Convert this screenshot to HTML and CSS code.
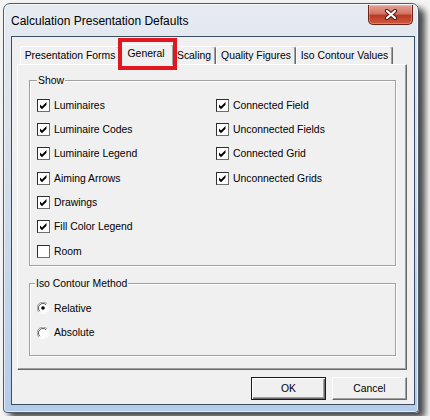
FILE: index.html
```html
<!DOCTYPE html>
<html lang="en">
<head>
<meta charset="UTF-8">
<meta name="viewport" content="width=device-width, initial-scale=1.0">
<title>Calculation Presentation Defaults</title>
<link rel="stylesheet" href="styles.css">
</head>
<body>
<div class="window">
    <div class="titlebar">
        <span class="title">Calculation Presentation Defaults</span>
        <button class="close" aria-label="Close">
            <svg width="14" height="11" viewBox="0 0 14 11">
                <path d="M3 2 L11 9 M11 2 L3 9" stroke="#4a1a12" stroke-width="4.2" stroke-linecap="round"/>
                <path d="M3 2 L11 9 M11 2 L3 9" stroke="#fff" stroke-width="2.2" stroke-linecap="round"/>
            </svg>
        </button>
    </div>

    <div class="client">
        <div class="tabs">
            <div class="tab tab-forms">Presentation Forms</div>
            <div class="tab tab-general active">General</div>
            <div class="tab tab-scaling">Scaling</div>
            <div class="tab tab-quality">Quality Figures</div>
            <div class="tab tab-iso">Iso Contour Values</div>
        </div>

        <div class="panel">
            <fieldset class="group group-show">
                <legend>Show</legend>
                <div class="check-grid">
                    <label class="check"><span class="box"><svg width="11" height="11" viewBox="0 0 11 11"><polygon points="2,4.5 4,6.5 8.5,2 8.5,4.8 4,9.3 2,7.3"/></svg></span>Luminaires</label>
                    <label class="check"><span class="box"><svg width="11" height="11" viewBox="0 0 11 11"><polygon points="2,4.5 4,6.5 8.5,2 8.5,4.8 4,9.3 2,7.3"/></svg></span>Luminaire Codes</label>
                    <label class="check"><span class="box"><svg width="11" height="11" viewBox="0 0 11 11"><polygon points="2,4.5 4,6.5 8.5,2 8.5,4.8 4,9.3 2,7.3"/></svg></span>Luminaire Legend</label>
                    <label class="check"><span class="box"><svg width="11" height="11" viewBox="0 0 11 11"><polygon points="2,4.5 4,6.5 8.5,2 8.5,4.8 4,9.3 2,7.3"/></svg></span>Aiming Arrows</label>
                    <label class="check"><span class="box"><svg width="11" height="11" viewBox="0 0 11 11"><polygon points="2,4.5 4,6.5 8.5,2 8.5,4.8 4,9.3 2,7.3"/></svg></span>Drawings</label>
                    <label class="check"><span class="box"><svg width="11" height="11" viewBox="0 0 11 11"><polygon points="2,4.5 4,6.5 8.5,2 8.5,4.8 4,9.3 2,7.3"/></svg></span>Fill Color Legend</label>
                    <label class="check"><span class="box"></span>Room</label>
                    <label class="check"><span class="box"><svg width="11" height="11" viewBox="0 0 11 11"><polygon points="2,4.5 4,6.5 8.5,2 8.5,4.8 4,9.3 2,7.3"/></svg></span>Connected Field</label>
                    <label class="check"><span class="box"><svg width="11" height="11" viewBox="0 0 11 11"><polygon points="2,4.5 4,6.5 8.5,2 8.5,4.8 4,9.3 2,7.3"/></svg></span>Unconnected Fields</label>
                    <label class="check"><span class="box"><svg width="11" height="11" viewBox="0 0 11 11"><polygon points="2,4.5 4,6.5 8.5,2 8.5,4.8 4,9.3 2,7.3"/></svg></span>Connected Grid</label>
                    <label class="check"><span class="box"><svg width="11" height="11" viewBox="0 0 11 11"><polygon points="2,4.5 4,6.5 8.5,2 8.5,4.8 4,9.3 2,7.3"/></svg></span>Unconnected Grids</label>
                </div>
            </fieldset>

            <fieldset class="group group-iso">
                <legend>Iso Contour Method</legend>
                <div class="radio-list">
                    <label class="radio">
                        <svg width="12" height="12" viewBox="0 0 12 12">
                            <circle cx="6" cy="6" r="5" fill="#fff"/>
                            <path d="M1.8 10.2 A5.5 5.5 0 0 1 10.2 1.8" fill="none" stroke="#9a9a9a"/>
                            <path d="M2.8 9.2 A4.5 4.5 0 0 1 9.2 2.8" fill="none" stroke="#555"/>
                            <path d="M10.2 1.8 A5.5 5.5 0 0 1 1.8 10.2" fill="none" stroke="#fff"/>
                            <circle cx="6" cy="6" r="1.8" fill="#000"/>
                        </svg>
                        Relative
                    </label>
                    <label class="radio">
                        <svg width="12" height="12" viewBox="0 0 12 12">
                            <circle cx="6" cy="6" r="5" fill="#fff"/>
                            <path d="M1.8 10.2 A5.5 5.5 0 0 1 10.2 1.8" fill="none" stroke="#9a9a9a"/>
                            <path d="M2.8 9.2 A4.5 4.5 0 0 1 9.2 2.8" fill="none" stroke="#555"/>
                            <path d="M10.2 1.8 A5.5 5.5 0 0 1 1.8 10.2" fill="none" stroke="#fff"/>
                        </svg>
                        Absolute
                    </label>
                </div>
            </fieldset>
        </div>

        <div class="actions">
            <button class="btn btn-default">OK</button>
            <button class="btn">Cancel</button>
        </div>
    </div>
</div>
</body>
</html>
```

FILE: styles.css
```css
*,
*::before,
*::after {
    box-sizing: border-box;
}

body {
    margin: 0;
    padding: 3px;
    background-color: #f4f4f4;
    font-family: "Liberation Sans", Arial, sans-serif;
    font-size: 10.4px;
    color: #000;
}

.window {
    width: 416px;
    height: 410px;
    display: flex;
    flex-direction: column;
    padding: 0 3px 7px 7px;
    border: 1px solid #4e5c6b;
    border-radius: 7px 7px 4px 4px;
    background: linear-gradient(180deg, #e6ebf1 0%, #d8e0ea 35%, #b4cce9 100%);
    box-shadow: inset 0 0 0 1px rgba(255, 255, 255, 0.6), 6px 5px 6px rgba(0, 0, 0, 0.7);
}

.titlebar {
    height: 32px;
    flex: none;
    display: flex;
    justify-content: space-between;
    align-items: flex-start;
}

.title {
    font-size: 12px;
    line-height: 14px;
    margin-top: 10px;
}

.close {
    width: 45px;
    height: 20px;
    margin: 1px 2px 0 0;
    padding: 0;
    display: flex;
    align-items: center;
    justify-content: center;
    border: 1px solid #6e2218;
    border-top: none;
    border-radius: 0 0 5px 5px;
    background: linear-gradient(180deg, #e3a195 0%, #d37463 45%, #b93a25 55%, #cf5a3f 100%);
    box-shadow: inset 0 0 0 1px rgba(255, 255, 255, 0.25);
}

.client {
    flex: 1;
    display: flex;
    flex-direction: column;
    padding: 0 7px 4px 5px;
    border: 1px solid #3b4d63;
    background-color: #f0f0f0;
}

/* tab strip */
.tabs {
    display: flex;
    align-items: flex-end;
    height: 20px;
    margin-top: 7px;
    padding-left: 3px;
}

.tab {
    height: 18px;
    line-height: 17px;
    text-align: center;
    white-space: nowrap;
    border: 1px solid;
    border-color: #fff #696969 transparent #fff;
    border-bottom: none;
    border-radius: 3px 3px 0 0;
    box-shadow: inset -1px 0 0 #a0a0a0;
    background-color: #f0f0f0;
}

.tab-forms { width: 100px; }
.tab-general { width: 52px; }
.tab-scaling { width: 44px; }
.tab-quality { width: 80px; }
.tab-iso { width: 97px; }

.tab.active {
    width: 56px;
    height: 21px;
    line-height: 18px;
    margin: 0 -2px -1px;
    position: relative;
    z-index: 1;
}

.tab.active::after {
    content: "";
    position: absolute;
    left: -1px;
    top: -7px;
    width: 59px;
    height: 32px;
    border: 4px solid #e2161f;
}

.panel {
    flex: none;
    height: 306px;
    padding: 9px 10px 0 11px;
    border: 1px solid;
    border-color: #fff #696969 #696969 #fff;
    box-shadow: inset -1px -1px 0 #a0a0a0;
}

/* group boxes */
.group {
    margin: 0;
    min-width: 0;
    padding: 6px 0 2px 7px;
    border: 1px solid #a0a0a0;
    box-shadow: inset 1px 1px 0 #fff, 1px 1px 0 #fff;
}

.group legend {
    padding: 0 1px;
    line-height: 13px;
    background-color: #f0f0f0;
}

.group-iso {
    margin-top: 11px;
    padding-bottom: 10px;
}

.group-iso legend {
    margin-left: -2px;
}

.check-grid {
    display: grid;
    grid-template-columns: 179px 1fr;
    grid-template-rows: repeat(7, 24.33px);
    grid-auto-flow: column;
}

.check {
    display: flex;
    align-items: center;
    gap: 4px;
}

.box {
    width: 13px;
    height: 13px;
    display: flex;
    border: 1px solid;
    border-color: #2e2e2e #6e6e6e #6e6e6e #2e2e2e;
    background-color: #fff;
}

.radio-list {
    display: grid;
    grid-template-rows: repeat(2, 24.33px);
}

.radio {
    display: flex;
    align-items: center;
    gap: 5px;
}

/* dialog buttons */
.actions {
    display: flex;
    justify-content: flex-end;
    gap: 6px;
    margin-top: 7px;
}

.btn {
    width: 75px;
    height: 23px;
    padding: 0;
    font-family: inherit;
    font-size: 10.4px;
    color: #000;
    background-color: #f0f0f0;
    border: 1px solid;
    border-color: #fff #696969 #696969 #fff;
    box-shadow: inset -1px -1px 0 #a0a0a0;
}

.btn-default {
    border-color: #1a1a1a;
    box-shadow: inset 1px 1px 0 #fff, inset -1px -1px 0 #696969, inset -2px -2px 0 #a0a0a0;
}
```
